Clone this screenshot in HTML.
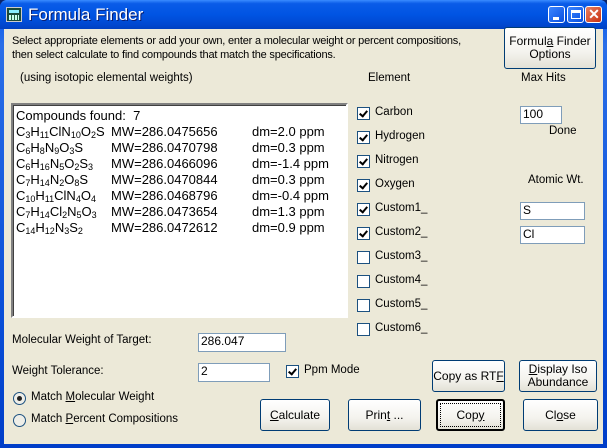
<!DOCTYPE html>
<html><head><style>
*{margin:0;padding:0;box-sizing:border-box}
body{width:607px;height:448px;overflow:hidden;background:#0a246a;font-family:"Liberation Sans",sans-serif;font-size:11px;color:#000;position:relative}
.a{position:absolute;white-space:nowrap}
#win{position:absolute;left:0;top:0;width:607px;height:448px;background:linear-gradient(#0058ee,#2a6ee8 10%,#0a4fd8 70%,#003dc8);border-radius:7px 7px 0 0}
#title{position:absolute;left:0;top:0;width:607px;height:29px;background:linear-gradient(#3a8cff 0,#0a5ce8 12%,#0054e3 50%,#0048d0 85%,#0040c0 100%);border-radius:7px 7px 0 0}
#client{position:absolute;left:4px;top:29px;width:599px;height:415px;background:#ece9d8}
.tb{position:absolute;top:6px;width:17px;height:17px;border:1px solid #fff;border-radius:3px;background:linear-gradient(135deg,#3c86ff,#0a50e0)}
.btn{position:absolute;border:1px solid #003c74;border-radius:3px;background:linear-gradient(#fff,#f4f3ee 60%,#e3e1d6);text-align:center;display:flex;align-items:center;justify-content:center;line-height:13px;font-size:12px}
.cb{position:absolute;width:13px;height:13px;border:1px solid #1c5180;background:#fff}
.cb.on::after{content:"";position:absolute;left:3px;top:1px;width:3px;height:6px;border:solid #000;border-width:0 2px 2px 0;transform:rotate(40deg)}
.in{position:absolute;background:#fff;border:1px solid #7f9db9;padding-left:2px;font-size:12px;line-height:15px}
.lst{font-size:13px;line-height:16px}
sub{font-size:9px;vertical-align:-2px;line-height:0}
.rd{position:absolute;width:13px;height:13px;border-radius:50%;border:1px solid #1c5180;background:#eeeee8}
u{text-decoration:underline}
.l{font-size:11.5px}
</style></head><body>
<div id="win"></div>
<div id="title">
 <div class="a" style="left:6px;top:7px;width:16px;height:15px;background:#1a4a3a;border:1px solid #ccc"><div style="margin:2px;height:3px;background:#8ef"></div><div style="margin:2px;height:5px;background:repeating-linear-gradient(90deg,#cfe 0 2px,#264 2px 3px)"></div></div>
 <div class="a" style="left:28px;top:5px;font-size:17px;color:#fff;text-shadow:1px 1px #0a1e70">Formula Finder</div>
 <div class="tb" style="left:548px"><div style="position:absolute;left:4px;top:10px;width:6px;height:3px;background:#fff"></div></div>
 <div class="tb" style="left:567px"><div style="position:absolute;left:3px;top:3px;width:10px;height:9px;border:1px solid #fff;border-top-width:3px"></div></div>
 <div class="tb" style="left:585px;background:linear-gradient(135deg,#e88060,#c83010)"><div style="position:absolute;left:1px;top:-1px;color:#fff;font-weight:bold;font-size:14px;line-height:17px;width:14px;text-align:center">✕</div></div>
</div>
<div id="client"></div>

<div class="a" style="left:12px;top:34px;line-height:14px;font-size:11px;letter-spacing:-0.2px">Select appropriate elements or add your own, enter a molecular weight or percent compositions,<br>then select calculate to find compounds that match the specifications.</div>
<div class="btn" style="left:504px;top:27px;width:92px;height:42px"><span>Formul<u>a</u> Finder<br>Options</span></div>
<div class="a l" style="left:20px;top:72px">(using isotopic elemental weights)</div>
<div class="a l" style="left:368px;top:72px">Element</div>
<div class="a l" style="left:521px;top:72px">Max Hits</div>

<div class="a lst" style="left:11px;top:103px;width:337px;height:215px;background:#fff;border:2px solid;border-color:#808080 #fff #fff #808080;box-shadow:inset 1px 1px #404040"></div>
<div class="a lst" style="left:16px;top:108px">Compounds found:&nbsp; 7</div>
<div class="a lst" style="left:16px;top:124px">C<sub>3</sub>H<sub>11</sub>ClN<sub>10</sub>O<sub>2</sub>S<br>C<sub>6</sub>H<sub>8</sub>N<sub>9</sub>O<sub>3</sub>S<br>C<sub>6</sub>H<sub>16</sub>N<sub>5</sub>O<sub>2</sub>S<sub>3</sub><br>C<sub>7</sub>H<sub>14</sub>N<sub>2</sub>O<sub>8</sub>S<br>C<sub>10</sub>H<sub>11</sub>ClN<sub>4</sub>O<sub>4</sub><br>C<sub>7</sub>H<sub>14</sub>Cl<sub>2</sub>N<sub>5</sub>O<sub>3</sub><br>C<sub>14</sub>H<sub>12</sub>N<sub>3</sub>S<sub>2</sub></div>
<div class="a lst" style="left:111px;top:124px">MW=286.0475656<br>MW=286.0470798<br>MW=286.0466096<br>MW=286.0470844<br>MW=286.0468796<br>MW=286.0473654<br>MW=286.0472612</div>
<div class="a lst" style="left:252px;top:124px">dm=2.0 ppm<br>dm=0.3 ppm<br>dm=-1.4 ppm<br>dm=0.3 ppm<br>dm=-0.4 ppm<br>dm=1.3 ppm<br>dm=0.9 ppm</div>

<div class="cb on" style="left:357px;top:107px"></div><div class="a l" style="left:375px;top:106px">Carbon</div>
<div class="cb on" style="left:357px;top:131px"></div><div class="a l" style="left:375px;top:130px">Hydrogen</div>
<div class="cb on" style="left:357px;top:155px"></div><div class="a l" style="left:375px;top:154px">Nitrogen</div>
<div class="cb on" style="left:357px;top:179px"></div><div class="a l" style="left:375px;top:178px">Oxygen</div>
<div class="cb on" style="left:357px;top:203px"></div><div class="a l" style="left:375px;top:202px">Custom1_</div>
<div class="cb on" style="left:357px;top:227px"></div><div class="a l" style="left:375px;top:226px">Custom2_</div>
<div class="cb" style="left:357px;top:251px"></div><div class="a l" style="left:375px;top:250px">Custom3_</div>
<div class="cb" style="left:357px;top:275px"></div><div class="a l" style="left:375px;top:274px">Custom4_</div>
<div class="cb" style="left:357px;top:299px"></div><div class="a l" style="left:375px;top:298px">Custom5_</div>
<div class="cb" style="left:357px;top:323px"></div><div class="a l" style="left:375px;top:322px">Custom6_</div>

<div class="in" style="left:520px;top:106px;width:42px;height:18px">100</div>
<div class="a l" style="left:549px;top:125px">Done</div>
<div class="a l" style="left:528px;top:174px">Atomic Wt.</div>
<div class="in" style="left:520px;top:202px;width:65px;height:18px">S</div>
<div class="in" style="left:520px;top:226px;width:65px;height:18px">Cl</div>

<div class="a l" style="left:12px;top:334px">Molecular Weight of Target:</div>
<div class="in" style="left:198px;top:333px;width:88px;height:19px">286.047</div>
<div class="a l" style="left:12px;top:365px">Weight Tolerance:</div>
<div class="in" style="left:198px;top:363px;width:72px;height:19px">2</div>
<div class="cb on" style="left:286px;top:365px"></div><div class="a l" style="left:304px;top:364px">Ppm Mode</div>

<div class="rd" style="left:13px;top:392px"><div style="position:absolute;left:3px;top:3px;width:5px;height:5px;border-radius:50%;background:#222"></div></div>
<div class="a l" style="left:31px;top:391px">Match <u>M</u>olecular Weight</div>
<div class="rd" style="left:13px;top:414px"></div>
<div class="a l" style="left:31px;top:413px">Match <u>P</u>ercent Compositions</div>

<div class="btn" style="left:432px;top:360px;width:73px;height:32px"><span>Copy as RT<u>F</u></span></div>
<div class="btn" style="left:519px;top:360px;width:78px;height:32px"><span><u>D</u>isplay Iso<br>Abundance</span></div>
<div class="btn" style="left:260px;top:399px;width:70px;height:32px"><span><u>C</u>alculate</span></div>
<div class="btn" style="left:348px;top:399px;width:73px;height:32px"><span>Prin<u>t</u> ...</span></div>
<div class="btn" style="left:436px;top:399px;width:69px;height:32px;border:2px solid #000"><div style="position:absolute;left:2px;top:2px;right:2px;bottom:2px;border:1px dotted #000"></div><span>Cop<u>y</u></span></div>
<div class="btn" style="left:523px;top:399px;width:75px;height:32px"><span>Cl<u>o</u>se</span></div>
</body></html>
